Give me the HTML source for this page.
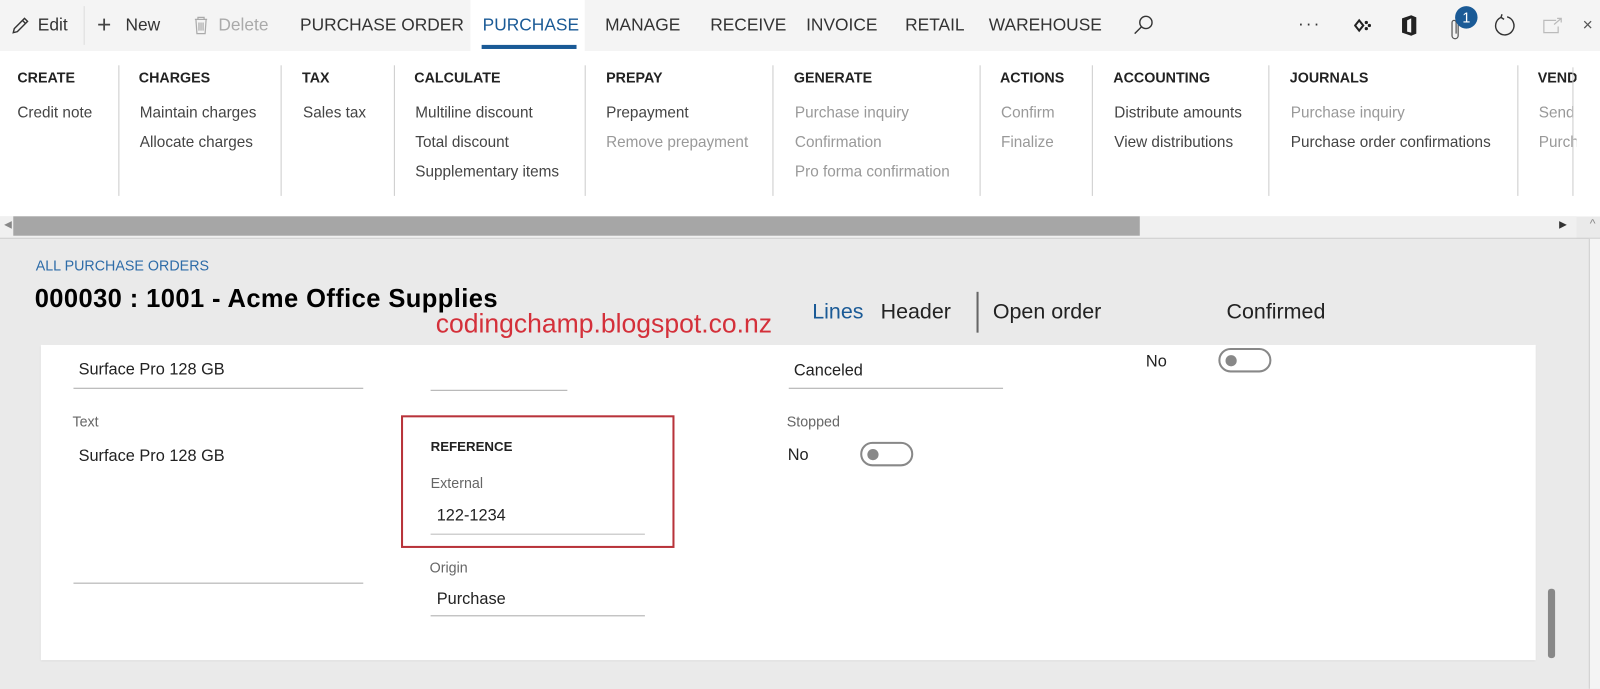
<!DOCTYPE html>
<html><head><meta charset="utf-8"><style>
*{margin:0;padding:0;box-sizing:border-box}
html,body{width:1600px;height:675px;overflow:hidden;background:#eaeaea}
body{font-family:"Liberation Sans",sans-serif;color:#222}
#w{position:absolute;left:0;top:0;width:1568px;height:662px;transform:scale(1.0204);transform-origin:0 0}
.a{position:absolute;white-space:nowrap}
.top{left:0;top:0;width:1568px;height:50px;background:#f4f4f4}
.mn{top:15px;font-size:17px;color:#333}
.rib{left:0;top:50px;width:1568px;height:162px;background:#fff}
.h{top:68px;font-size:14px;font-weight:bold;color:#222}
.it{font-size:15px;color:#444}
.dis{color:#999}
.sep{top:64px;width:1px;height:128px;background:#ccc}
.lbl{font-size:14px;color:#666}
.val{font-size:16px;color:#222}
.ul{height:1px;background:#aaa}
.tg{width:52px;height:24px;border:2px solid #888;border-radius:12px}
.tg:after{content:"";position:absolute;left:5px;top:5px;width:11px;height:11px;border-radius:50%;background:#888}
</style></head><body><div id="w">
<div class="a top"></div>
<svg class="a" style="left:10px;top:15px" width="20" height="20" viewBox="0 0 20 20"><path d="M3 17l1-4L14 3l3 3L7 16z M12 5l3 3" fill="none" stroke="#333" stroke-width="1.4"/></svg>
<div class="a mn" style="left:37px">Edit</div>
<div class="a" style="left:82px;top:6px;width:1px;height:38px;background:#ddd"></div>
<div class="a mn" style="left:95px;top:11px;font-size:24px;font-weight:200;color:#444">+</div>
<div class="a mn" style="left:123px">New</div>
<svg class="a" style="left:189px;top:15px" width="16" height="20" viewBox="0 0 16 20"><path d="M2 4h12M5 4V2h6v2M3 4l1 14h8l1-14M6 7v8M8 7v8M10 7v8" fill="none" stroke="#aaa" stroke-width="1.2"/></svg>
<div class="a mn" style="left:214px;color:#aaa">Delete</div>
<div class="a mn" style="left:294px">PURCHASE ORDER</div>
<div class="a mn" style="left:461px;top:0;width:112px;height:50px;background:#fff"></div>
<div class="a mn" style="left:473px;color:#1a5a96">PURCHASE</div>
<div class="a" style="left:472px;top:44px;width:93px;height:4px;background:#1a5a96"></div>
<div class="a mn" style="left:593px">MANAGE</div>
<div class="a mn" style="left:696px">RECEIVE</div>
<div class="a mn" style="left:790px">INVOICE</div>
<div class="a mn" style="left:887px">RETAIL</div>
<div class="a mn" style="left:969px">WAREHOUSE</div>
<svg class="a" style="left:1110px;top:14px" width="22" height="22" viewBox="0 0 22 22"><circle cx="13" cy="8" r="6" fill="none" stroke="#333" stroke-width="1.4"/><path d="M9 12l-7 7" stroke="#333" stroke-width="1.4"/></svg>
<div class="a mn" style="left:1272px;top:14px;letter-spacing:2px">···</div>
<svg class="a" style="left:1327px;top:18px" width="18" height="14" viewBox="0 0 18 14"><path d="M5 2l4 5-4 5-4-5z" fill="none" stroke="#222" stroke-width="2"/><circle cx="12" cy="4" r="1.6" fill="#222"/><circle cx="15" cy="7" r="1.6" fill="#222"/><circle cx="12" cy="10" r="1.6" fill="#222"/></svg>
<svg class="a" style="left:1372px;top:14px" width="18" height="22" viewBox="0 0 18 22"><path d="M2 4l9-3 5 2v16l-5 2-9-3z M7 6v11l4 1V4z" fill="#222" fill-rule="evenodd"/></svg>
<svg class="a" style="left:1421px;top:18px" width="12" height="22" viewBox="0 0 12 22"><path d="M8 5v12a3 3 0 0 1-6 0V4a2 2 0 0 1 4 0v11" fill="none" stroke="#555" stroke-width="1.2"/></svg>
<div class="a" style="left:1426px;top:6px;width:22px;height:22px;border-radius:50%;background:#1a5a96;color:#fff;font-size:14px;text-align:center;line-height:22px">1</div>
<svg class="a" style="left:1463px;top:13px" width="24" height="24" viewBox="0 0 24 24"><path d="M8 4A9 9 0 1 0 14 3.5M8 4l1-3M8 4l3 2" fill="none" stroke="#333" stroke-width="1.4"/></svg>
<svg class="a" style="left:1511px;top:16px" width="22" height="18" viewBox="0 0 22 18"><path d="M14 4H2v12h14v-6M12 8l7-6M15 2h4v4" fill="none" stroke="#bbb" stroke-width="1.2"/></svg>
<div class="a mn" style="left:1551px;color:#555">×</div>

<div class="a rib"></div>
<div class="a h" style="left:17px">CREATE</div>
<div class="a it" style="left:17px;top:102px">Credit note</div>
<div class="a sep" style="left:116px"></div>
<div class="a h" style="left:136px">CHARGES</div>
<div class="a it" style="left:137px;top:102px">Maintain charges</div>
<div class="a it" style="left:137px;top:131px">Allocate charges</div>
<div class="a sep" style="left:275px"></div>
<div class="a h" style="left:296px">TAX</div>
<div class="a it" style="left:297px;top:102px">Sales tax</div>
<div class="a sep" style="left:386px"></div>
<div class="a h" style="left:406px">CALCULATE</div>
<div class="a it" style="left:407px;top:102px">Multiline discount</div>
<div class="a it" style="left:407px;top:131px">Total discount</div>
<div class="a it" style="left:407px;top:160px">Supplementary items</div>
<div class="a sep" style="left:573px"></div>
<div class="a h" style="left:594px">PREPAY</div>
<div class="a it" style="left:594px;top:102px">Prepayment</div>
<div class="a it dis" style="left:594px;top:131px">Remove prepayment</div>
<div class="a sep" style="left:757px"></div>
<div class="a h" style="left:778px">GENERATE</div>
<div class="a it dis" style="left:779px;top:102px">Purchase inquiry</div>
<div class="a it dis" style="left:779px;top:131px">Confirmation</div>
<div class="a it dis" style="left:779px;top:160px">Pro forma confirmation</div>
<div class="a sep" style="left:960px"></div>
<div class="a h" style="left:980px">ACTIONS</div>
<div class="a it dis" style="left:981px;top:102px">Confirm</div>
<div class="a it dis" style="left:981px;top:131px">Finalize</div>
<div class="a sep" style="left:1070px"></div>
<div class="a h" style="left:1091px">ACCOUNTING</div>
<div class="a it" style="left:1092px;top:102px">Distribute amounts</div>
<div class="a it" style="left:1092px;top:131px">View distributions</div>
<div class="a sep" style="left:1243px"></div>
<div class="a h" style="left:1264px">JOURNALS</div>
<div class="a it dis" style="left:1265px;top:102px">Purchase inquiry</div>
<div class="a it" style="left:1265px;top:131px">Purchase order confirmations</div>
<div class="a sep" style="left:1487px"></div>
<div class="a h" style="left:1507px">VENDOR</div>
<div class="a it dis" style="left:1508px;top:102px">Send</div>
<div class="a it dis" style="left:1508px;top:131px">Purchase</div>
<div class="a" style="left:1545px;top:50px;width:30px;height:162px;background:#fff"></div>
<div class="a" style="left:1541px;top:66px;width:1px;height:126px;background:#ccc"></div>

<div class="a" style="left:0;top:212px;width:1545px;height:22px;background:#f0f0f0"></div>
<div class="a" style="left:13px;top:212px;width:1104px;height:19px;background:#a6a6a6"></div>
<div class="a" style="left:4px;top:215px;font-size:10px;color:#888">◀</div>
<div class="a" style="left:1528px;top:215px;font-size:10px;color:#333">▶</div>
<div class="a" style="left:1558px;top:212px;font-size:12px;color:#888">^</div>
<div class="a" style="left:0;top:233px;width:1568px;height:1px;background:#ccc"></div>
<div class="a" style="left:1557px;top:234px;width:20px;height:441px;background:#f4f4f4;border-left:1px solid #ccc"></div>

<div class="a" style="left:35px;top:252px;font-size:14px;color:#2e6ca8">ALL PURCHASE ORDERS</div>
<div class="a" style="left:34px;top:279px;font-size:25px;font-weight:bold;color:#000;letter-spacing:0.4px">000030 : 1001 - Acme Office Supplies</div>
<div class="a" style="left:427px;top:302px;font-size:26px;color:#d4303a">codingchamp.blogspot.co.nz</div>
<div class="a" style="left:796px;top:294px;font-size:21px;color:#1a5a96">Lines</div>
<div class="a" style="left:863px;top:294px;font-size:21px;color:#222">Header</div>
<div class="a" style="left:957px;top:286px;width:2px;height:40px;background:#666"></div>
<div class="a" style="left:973px;top:294px;font-size:21px;color:#222">Open order</div>
<div class="a" style="left:1202px;top:294px;font-size:21px;color:#222">Confirmed</div>

<div class="a" style="left:40px;top:338px;width:1465px;height:309px;background:#fff;box-shadow:0 1px 2px rgba(0,0,0,.12)"></div>
<div class="a val" style="left:77px;top:354px">Surface Pro 128 GB</div>
<div class="a ul" style="left:72px;top:380px;width:284px"></div>
<div class="a ul" style="left:422px;top:382px;width:134px"></div>
<div class="a val" style="left:778px;top:355px">Canceled</div>
<div class="a ul" style="left:773px;top:380px;width:210px"></div>
<div class="a val" style="left:1123px;top:346px">No</div>
<div class="a tg" style="left:1194px;top:341px"></div>
<div class="a lbl" style="left:71px;top:405px">Text</div>
<div class="a val" style="left:77px;top:439px">Surface Pro 128 GB</div>
<div class="a ul" style="left:72px;top:571px;width:284px"></div>
<div class="a" style="left:393px;top:407px;width:268px;height:130px;border:2px solid #b8333a"></div>
<div class="a" style="left:422px;top:430px;font-size:13px;font-weight:bold;color:#222">REFERENCE</div>
<div class="a lbl" style="left:422px;top:465px">External</div>
<div class="a val" style="left:428px;top:497px">122-1234</div>
<div class="a ul" style="left:422px;top:523px;width:210px;background:#bbb"></div>
<div class="a lbl" style="left:421px;top:548px">Origin</div>
<div class="a val" style="left:428px;top:579px">Purchase</div>
<div class="a ul" style="left:422px;top:603px;width:210px"></div>
<div class="a lbl" style="left:771px;top:405px">Stopped</div>
<div class="a val" style="left:772px;top:438px">No</div>
<div class="a tg" style="left:843px;top:433px"></div>
<div class="a" style="left:1517px;top:577px;width:7px;height:68px;background:#888;border-radius:3px"></div>
</div></body></html>
